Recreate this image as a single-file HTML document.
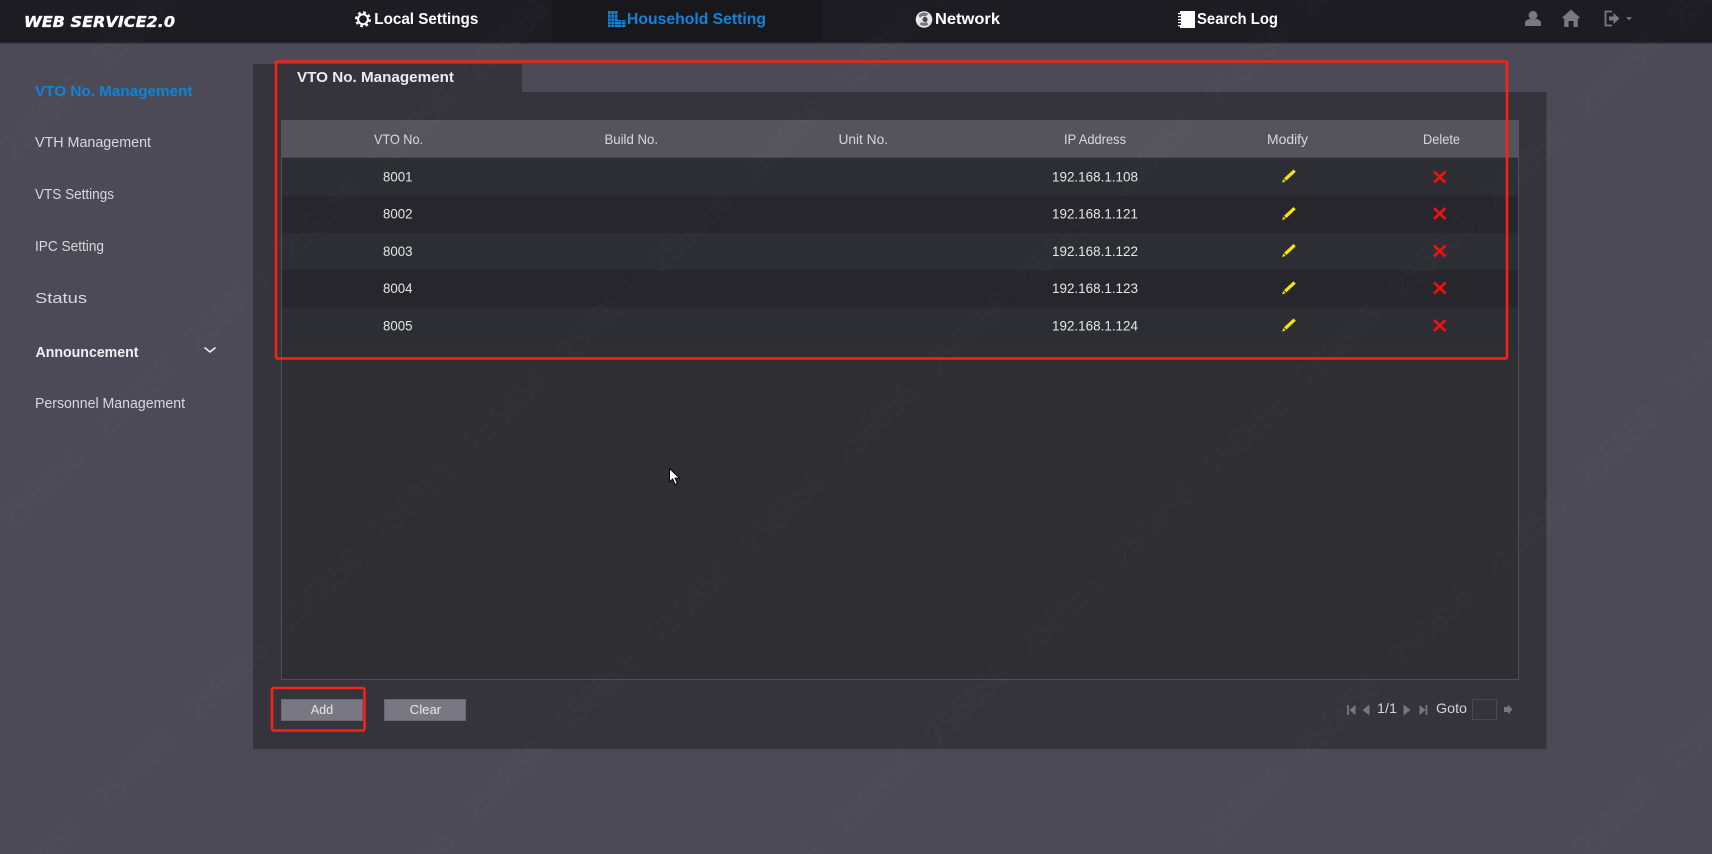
<!DOCTYPE html>
<html lang="en">
<head>
<meta charset="utf-8">
<title>WEB SERVICE2.0</title>
<style>
html,body{margin:0;padding:0;width:1712px;height:854px;overflow:hidden;background:#4c4a56}
svg{display:block}
text{font-family:"Liberation Sans",Arial,sans-serif;white-space:pre}
.nav{font-size:16px;font-weight:700;fill:#fff}
.side{font-size:15px;fill:#d8d8dc}
.th{font-size:14px;fill:#d8d8dc}
.td{font-size:14px;fill:#e6e6e8}
.btn{font-size:13px;fill:#e8e8e8}
.pg{font-size:14px;fill:#d4d4d8}
.ic{fill:#7a7983}
.pi{fill:#777680}
</style>
</head>
<body>
<svg width="1712" height="854" viewBox="0 0 1712 854" xmlns="http://www.w3.org/2000/svg">
<defs>
<pattern id="wm" width="129" height="266" patternUnits="userSpaceOnUse" patternTransform="translate(1587 490) rotate(-44)">
<text x="0" y="0" font-size="34" fill="none" stroke="#fff" stroke-opacity=".018" stroke-width="1" style="font-family:'Liberation Serif',serif">256856</text>
<text x="0" y="266" font-size="34" fill="none" stroke="#fff" stroke-opacity=".018" stroke-width="1" style="font-family:'Liberation Serif',serif">256856</text>
</pattern>
</defs>

<!-- page -->
<rect width="1712" height="854" fill="#4c4a56"/>

<!-- header -->
<rect width="1712" height="43" fill="#1d1c22"/>
<rect y="42.500" width="1712" height="1.500" fill="#393842"/>
<rect x="552" width="270" height="42" fill="#18171c"/>
<text x="24" y="27" textLength="151" lengthAdjust="spacingAndGlyphs" stroke="#fff" stroke-width=".35" style="font-family:'DejaVu Sans',sans-serif;font-weight:700;font-style:italic;font-size:15.500px;fill:#fff">WEB SERVICE2.0</text>

<!-- gear -->
<circle cx="363" cy="19.300" r="4.900" fill="none" stroke="#fff" stroke-width="2"/>
<circle cx="363" cy="19.300" r="6.800" fill="none" stroke="#fff" stroke-width="2.400" stroke-dasharray="2.700 2.640"/>
<text class="nav" x="374.300" y="24" textLength="104" lengthAdjust="spacingAndGlyphs">Local Settings</text>

<!-- household -->
<g fill="#0f85d9">
<rect x="608" y="11" width="9.500" height="16"/>
<rect x="617.500" y="20" width="8" height="7"/>
</g>
<g stroke="#18171c" stroke-width=".6" fill="none">
<path d="M611 11v16M614.300 11v16M608 14.500h9.500M608 18h9.500M608 21.500h17.500M608 24.500h17.500M621.500 20v7"/>
</g>
<text class="nav" x="627" y="24" textLength="139" lengthAdjust="spacingAndGlyphs" style="fill:#0f85d9">Household Setting</text>

<!-- network -->
<circle cx="924" cy="19.500" r="8.300" fill="#e8e8e8"/>
<path d="M918.500 15.500a7 7 0 0 1 10-1.500l-3 2.500a4 4 0 0 0-5.500 1.500zM919.500 24a7 7 0 0 0 9 .5l-2-2.800a4 4 0 0 1-5 .3z" fill="#77767e"/>
<circle cx="925" cy="19.500" r="2.600" fill="#4a4950"/>
<text class="nav" x="935" y="24" textLength="65" lengthAdjust="spacingAndGlyphs">Network</text>

<!-- search log -->
<rect x="1180" y="11" width="15" height="17" fill="#fff"/>
<path d="M1178 13h3v1.200h-3zM1178 16h3v1.200h-3zM1178 19h3v1.200h-3zM1178 22h3v1.200h-3zM1178 25h3v1.200h-3z" fill="#fff"/>
<path d="M1180 14.200h1v1.800h-1zM1180 17.200h1v1.800h-1zM1180 20.200h1v1.800h-1zM1180 23.200h1v1.800h-1z" fill="#1d1c22"/>
<text class="nav" x="1197" y="24" textLength="81" lengthAdjust="spacingAndGlyphs">Search Log</text>

<!-- right icons -->
<circle class="ic" cx="1533" cy="15.300" r="4.400"/>
<path class="ic" d="M1525 26v-3c0-2.500 3-3.600 5-4.100 1.800 1 4.200 1 6 0 2 .5 5 1.600 5 4.100v3z"/>
<path class="ic" d="M1571 9.500l9.500 8.800h-2.700V27h-4.300v-6h-5v6h-4.300v-8.700h-2.700z"/>
<path d="M1612 11.500h-6.500v14h6.500" fill="none" stroke="#7a7983" stroke-width="1.800"/>
<path class="ic" d="M1609 16.500h4.500v-3.500l6 5.500-6 5.500v-3.500h-4.500z"/>
<path class="ic" d="M1626 17.200h6l-3 3z"/>

<!-- sidebar -->
<text class="side" x="35" y="96" textLength="157.500" lengthAdjust="spacingAndGlyphs" style="font-weight:700;fill:#0f85d9">VTO No. Management</text>
<text class="side" x="35" y="147" textLength="116" lengthAdjust="spacingAndGlyphs">VTH Management</text>
<text class="side" x="35" y="199" textLength="79" lengthAdjust="spacingAndGlyphs">VTS Settings</text>
<text class="side" x="35" y="251" textLength="69" lengthAdjust="spacingAndGlyphs">IPC Setting</text>
<text class="side" x="35" y="303" textLength="52" lengthAdjust="spacingAndGlyphs">Status</text>
<text class="side" x="35.500" y="357" textLength="103" lengthAdjust="spacingAndGlyphs" style="font-weight:700;fill:#f0f0f2">Announcement</text>
<path d="M204.500 347.500l5.500 4.500 5.500-4.500" fill="none" stroke="#f0f0f2" stroke-width="1.600"/>
<text class="side" x="35" y="408" textLength="150" lengthAdjust="spacingAndGlyphs">Personnel Management</text>

<!-- panel -->
<rect x="253" y="92" width="1293.500" height="657" fill="#35343c"/>
<rect x="253" y="64" width="269" height="28" fill="#35343c"/>
<text x="297" y="82" textLength="157" lengthAdjust="spacingAndGlyphs" style="font-size:15px;font-weight:700;fill:#ececee">VTO No. Management</text>

<!-- table -->
<rect x="281.500" y="157.500" width="1237" height="522" fill="#2f2e33" stroke="#505057"/>
<rect x="281" y="120" width="1238" height="38" fill="#55545c"/>
<rect x="281" y="157" width="1238" height="1" fill="#47464d"/>
<rect x="282" y="158" width="1236" height="37.500" fill="#2d2d34"/>
<rect x="282" y="195.500" width="1236" height="37.500" fill="#27262c"/>
<rect x="282" y="233" width="1236" height="37" fill="#2d2d34"/>
<rect x="282" y="270" width="1236" height="37.500" fill="#27262c"/>
<rect x="282" y="307.500" width="1236" height="37.500" fill="#2d2d34"/>

<text class="th" x="374" y="144" textLength="49" lengthAdjust="spacingAndGlyphs">VTO No.</text>
<text class="th" x="604.500" y="144" textLength="53.500" lengthAdjust="spacingAndGlyphs">Build No.</text>
<text class="th" x="838.500" y="144" textLength="49.500" lengthAdjust="spacingAndGlyphs">Unit No.</text>
<text class="th" x="1064" y="144" textLength="62" lengthAdjust="spacingAndGlyphs">IP Address</text>
<text class="th" x="1267" y="144" textLength="41" lengthAdjust="spacingAndGlyphs">Modify</text>
<text class="th" x="1423" y="144" textLength="37" lengthAdjust="spacingAndGlyphs">Delete</text>

<text class="td" x="383" y="181.500" textLength="29.500" lengthAdjust="spacingAndGlyphs">8001</text>
<text class="td" x="383" y="218.700" textLength="29.500" lengthAdjust="spacingAndGlyphs">8002</text>
<text class="td" x="383" y="256" textLength="29.500" lengthAdjust="spacingAndGlyphs">8003</text>
<text class="td" x="383" y="293" textLength="29.500" lengthAdjust="spacingAndGlyphs">8004</text>
<text class="td" x="383" y="330.500" textLength="29.500" lengthAdjust="spacingAndGlyphs">8005</text>
<text class="td" x="1052" y="181.500" textLength="86" lengthAdjust="spacingAndGlyphs">192.168.1.108</text>
<text class="td" x="1052" y="218.700" textLength="86" lengthAdjust="spacingAndGlyphs">192.168.1.121</text>
<text class="td" x="1052" y="256" textLength="86" lengthAdjust="spacingAndGlyphs">192.168.1.122</text>
<text class="td" x="1052" y="293" textLength="86" lengthAdjust="spacingAndGlyphs">192.168.1.123</text>
<text class="td" x="1052" y="330.500" textLength="86" lengthAdjust="spacingAndGlyphs">192.168.1.124</text>

<!-- pencil icons -->
<g fill="#f4e60c">
<path d="M1293.500 169.500l2.300 2.300-9.500 8.800-2.300-2.300zM1283.300 179l2.300 2.300-3.400 1.400z"/>
<path d="M1293.500 207l2.300 2.300-9.500 8.800-2.300-2.300zM1283.300 216.500l2.300 2.300-3.400 1.400z"/>
<path d="M1293.500 244l2.300 2.300-9.500 8.800-2.300-2.300zM1283.300 253.500l2.300 2.300-3.400 1.400z"/>
<path d="M1293.500 281.300l2.300 2.300-9.500 8.800-2.300-2.300zM1283.300 290.800l2.300 2.300-3.400 1.400z"/>
<path d="M1293.500 318.500l2.300 2.300-9.500 8.800-2.300-2.300zM1283.300 328l2.300 2.300-3.400 1.400z"/>
</g>
<!-- delete icons -->
<g stroke="#f01010" stroke-width="2.600" fill="none">
<path d="M1434 171.500l11.500 11M1445.500 171.500l-11.500 11"/>
<path d="M1434 208l11.500 11M1445.500 208l-11.500 11"/>
<path d="M1434 245.500l11.500 11M1445.500 245.500l-11.500 11"/>
<path d="M1434 282.500l11.500 11M1445.500 282.500l-11.500 11"/>
<path d="M1434 320l11.500 11M1445.500 320l-11.500 11"/>
</g>

<!-- buttons -->
<rect x="281.500" y="699.500" width="81" height="21" fill="#797882" stroke="#6a6971"/>
<text class="btn" x="310.700" y="714" textLength="22.500" lengthAdjust="spacingAndGlyphs">Add</text>
<rect x="384.500" y="699.500" width="81" height="21" fill="#797882" stroke="#6a6971"/>
<text class="btn" x="409.700" y="714" textLength="31.500" lengthAdjust="spacingAndGlyphs">Clear</text>

<!-- pagination -->
<path class="pi" d="M1347 705h1.800v10H1347zM1355.500 705v10l-6-5z"/>
<path class="pi" d="M1369.500 704.500v11l-7-5.500z"/>
<text class="pg" x="1377" y="713" textLength="20" lengthAdjust="spacingAndGlyphs">1/1</text>
<path class="pi" d="M1403.500 704.500v11l7-5.500z"/>
<path class="pi" d="M1419.500 705v10l6-5zM1425.500 705h1.800v10h-1.800z"/>
<text class="pg" x="1436" y="713" textLength="31" lengthAdjust="spacingAndGlyphs">Goto</text>
<rect x="1472.500" y="699.500" width="24" height="20" fill="#35343c" stroke="#4a4953"/>
<path class="pi" d="M1504 707h4v-2.500l4.500 5-4.500 5V712h-4z"/>

<!-- cursor -->
<path d="M669.500 468.500v13.500l3.200-3 2.300 5.500 2.400-1-2.300-5.400h4.400z" fill="#fff" stroke="#000" stroke-width="1"/>

<!-- watermark -->
<rect width="1712" height="854" fill="url(#wm)"/>

<!-- annotation boxes -->
<rect x="276" y="61.500" width="1231" height="297" rx="1.500" fill="none" stroke="#ff2015" stroke-width="2.500"/>
<rect x="272" y="688" width="92.500" height="42.500" rx="1.500" fill="none" stroke="#ff2015" stroke-width="2.500"/>
</svg>
</body>
</html>
